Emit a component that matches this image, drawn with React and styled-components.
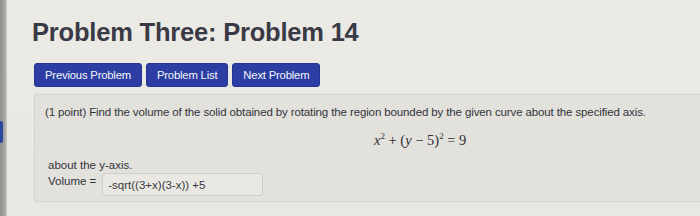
import React from 'react';
import styled, { createGlobalStyle } from 'styled-components';

const GlobalStyle = createGlobalStyle`
  html, body {
    margin: 0;
    padding: 0;
    background: #e9e8e3;
  }
  body {
    font-family: "Liberation Sans", Arial, sans-serif;
    width: 700px;
    height: 216px;
    overflow: hidden;
  }
`;

const Screen = styled.div`
  display: flex;
  width: 700px;
  height: 216px;
`;

const Bezel = styled.div`
  position: relative;
  width: 7px;
  flex: none;
  background: linear-gradient(90deg, #8f8e8a 0%, #a8a7a2 70%, #cfcec9 100%);
`;

const BezelTab = styled.div`
  position: absolute;
  left: 0;
  top: 121px;
  width: 3px;
  height: 22px;
  background: #2a4aa0;
  border-radius: 0 2px 2px 0;
`;

const Page = styled.div`
  flex: 1;
  padding: 18px 0 0 25px;
  background: linear-gradient(180deg, #ebeae5 0%, #e8e7e2 100%);
`;

const Title = styled.h1`
  margin: 0;
  font-size: 25.5px;
  font-weight: bold;
  color: #3a3a46;
  letter-spacing: -0.2px;
  line-height: 28px;
`;

const NavBar = styled.div`
  display: flex;
  gap: 4px;
  margin: 17px 0 0 2px;
`;

const NavButton = styled.button`
  height: 24px;
  padding: 0 10px;
  background: #2c3ea3;
  color: #f4f5fb;
  border: 1px solid #243493;
  border-radius: 3px;
  font-family: "Liberation Sans", Arial, sans-serif;
  font-size: 11.3px;
  letter-spacing: -0.2px;
`;

const Well = styled.div`
  margin: 7px -4px 0 2px;
  height: 108px;
  box-sizing: border-box;
  padding: 10px 0 0 10px;
  background: #e2e1db;
  border: 1px solid #d3d2cc;
  border-right: none;
  border-radius: 3px 0 0 3px;
  color: #33333b;
  font-size: 11.5px;
`;

const Statement = styled.p`
  margin: 0;
  line-height: 14px;
  letter-spacing: -0.12px;
`;

const Equation = styled.div`
  margin: 13px 0 0 329px;
  font-family: "Liberation Serif", "Times New Roman", serif;
  font-size: 14.5px;
  line-height: 16px;
  color: #2f2f35;

  i { font-style: italic; }
  sup { font-size: 9px; vertical-align: 6px; line-height: 0; }
`;

const Indent = styled.div`
  margin-left: 3px;
`;

const Axis = styled.p`
  margin: 10px 0 0;
  line-height: 14px;
`;

const AnswerRow = styled.div`
  display: flex;
  align-items: flex-start;
  gap: 6px;
  margin-top: 1px;
`;

const Label = styled.span`
  padding-top: 1px;
  line-height: 14px;
`;

const AnswerInput = styled.div`
  width: 161px;
  height: 23px;
  box-sizing: border-box;
  padding: 0 0 0 5px;
  display: flex;
  align-items: center;
  background: #e9e8e3;
  border: 1px solid #cfcec8;
  border-radius: 3px;
  font-size: 11.5px;
  color: #3a3a40;
`;

export default function App() {
  return (
    <>
      <GlobalStyle />
      <Screen>
        <Bezel>
          <BezelTab />
        </Bezel>
        <Page>
          <Title>Problem Three: Problem 14</Title>
          <NavBar>
            <NavButton>Previous Problem</NavButton>
            <NavButton>Problem List</NavButton>
            <NavButton>Next Problem</NavButton>
          </NavBar>
          <Well>
            <Statement>
              (1 point) Find the volume of the solid obtained by rotating the region bounded by the given curve about the specified axis.
            </Statement>
            <Equation>
              <i>x</i><sup>2</sup> + (<i>y</i> − 5)<sup>2</sup> = 9
            </Equation>
            <Indent>
              <Axis>about the y-axis.</Axis>
              <AnswerRow>
                <Label>Volume =</Label>
                <AnswerInput>-sqrt((3+x)(3-x)) +5</AnswerInput>
              </AnswerRow>
            </Indent>
          </Well>
        </Page>
      </Screen>
    </>
  );
}
